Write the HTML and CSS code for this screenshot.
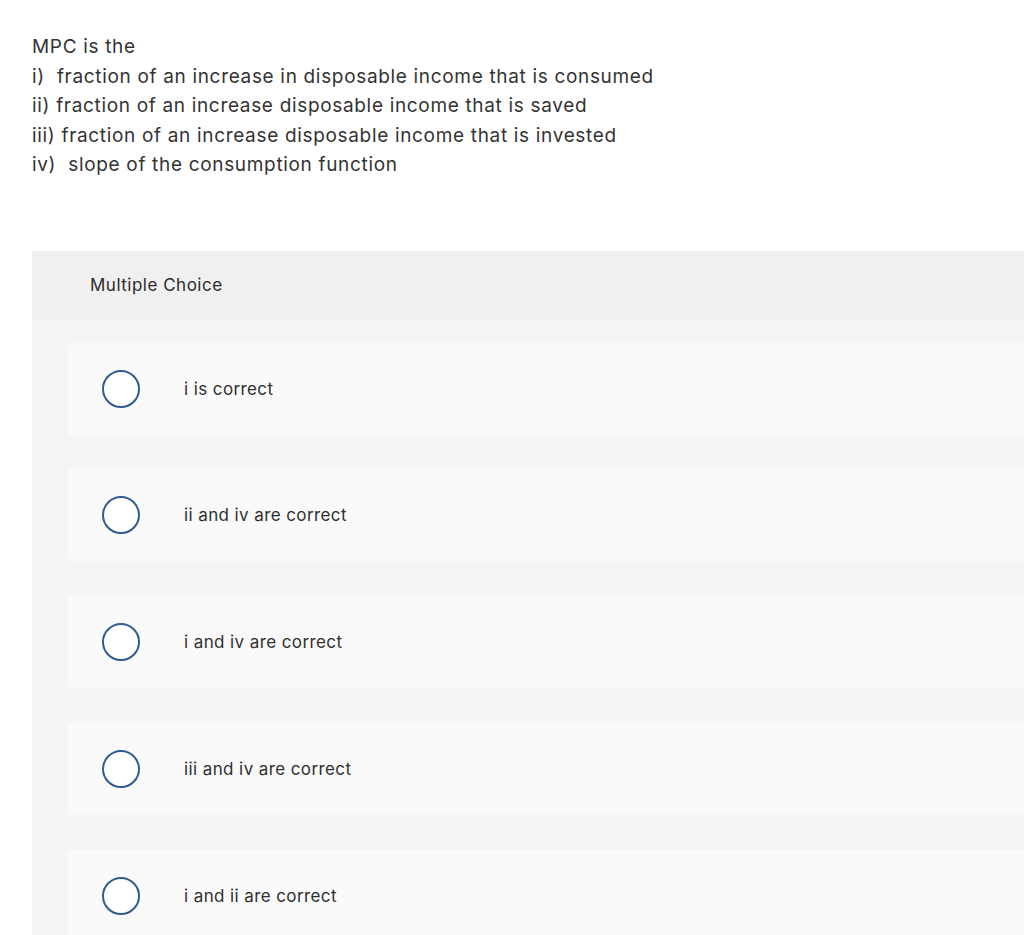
FILE: index.html
```html
<!DOCTYPE html>
<html>
<head>
<meta charset="utf-8">
<link rel="stylesheet" href="styles.css">
</head>
<body>
<div class="question">
  <p>MPC is the</p>
  <p>i)&nbsp; fraction of an increase in disposable income that is consumed</p>
  <p>ii) fraction of an increase disposable income that is saved</p>
  <p>iii) fraction of an increase disposable income that is invested</p>
  <p>iv)&nbsp; slope of the consumption function</p>
</div>
<div class="panel">
  <div class="panel-head">Multiple Choice</div>
  <div class="panel-body">
    <div class="option"><span class="radio"></span><span class="label">i is correct</span></div>
    <div class="option"><span class="radio"></span><span class="label">ii and iv are correct</span></div>
    <div class="option"><span class="radio"></span><span class="label">i and iv are correct</span></div>
    <div class="option"><span class="radio"></span><span class="label">iii and iv are correct</span></div>
    <div class="option"><span class="radio"></span><span class="label">i and ii are correct</span></div>
  </div>
</div>
</body>
</html>
```
FILE: styles.css
```css
html, body {
  margin: 0;
  padding: 0;
  background: #ffffff;
  overflow: hidden;
}
body {
  font-family: "Inter", "Lato", sans-serif;
  color: #333333;
  width: 1024px;
  height: 935px;
}
.question {
  padding: 32px 0 0 32px;
  font-size: 19px;
  letter-spacing: 0.67px;
  line-height: 29.5px;
}
.question p {
  margin: 0;
}
.panel {
  margin: 71px 0 0 32px;
  background: #f5f5f5;
  width: 1010px;
  height: 700px;
}
.panel-head {
  background: #f0f0f0;
  height: 69px;
  display: flex;
  align-items: center;
  padding-left: 58px;
  font-size: 17px;
  letter-spacing: 0.5px;
  color: #2b2b2b;
}
.panel-body {
  padding: 23px 0 0 36px;
  display: flex;
  flex-direction: column;
  gap: 34.75px;
}
.option {
  background: #fafafa;
  border-radius: 4px;
  height: 92px;
  display: flex;
  align-items: center;
  padding-left: 34px;
}
.radio {
  width: 34px;
  height: 34px;
  border: 2px solid #2d5b92;
  border-radius: 50%;
  background: #ffffff;
  flex: none;
}
.label {
  margin-left: 44px;
  font-size: 17px;
  letter-spacing: 0.4px;
  color: #2f2f2f;
}
```
